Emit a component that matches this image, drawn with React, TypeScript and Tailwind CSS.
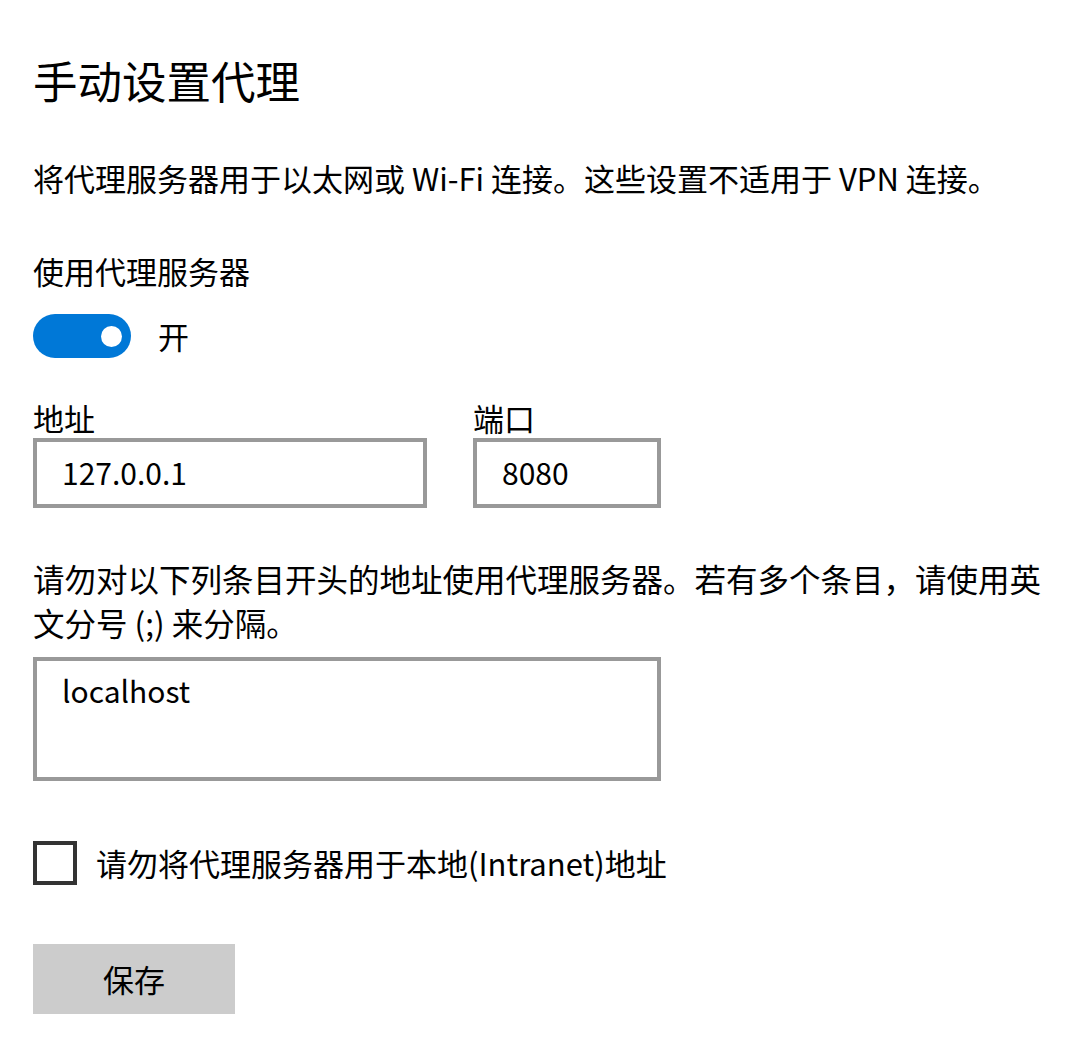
import { useState } from 'react';

const font = { fontFamily: '"Noto Sans CJK SC", "Noto Sans", sans-serif' };

export default function App() {
  const [enabled, setEnabled] = useState(true);
  const [address, setAddress] = useState('127.0.0.1');
  const [port, setPort] = useState('8080');
  const [bypass, setBypass] = useState('localhost');
  const [skipLocal, setSkipLocal] = useState(false);

  return (
    <div className="min-h-screen bg-white pl-[33px] pt-[50px] text-black" style={font}>
      <h1 className="h-[60px] text-[44.5px] leading-[60px] font-normal">手动设置代理</h1>

      <p className="mt-[46px] text-[31px] leading-[44px]">
        将代理服务器用于以太网或 Wi-Fi 连接。这些设置不适用于 VPN 连接。
      </p>

      <p className="mt-[49px] text-[31px] leading-[44px]">使用代理服务器</p>

      <div className="mt-[21px] flex items-center gap-[27px]">
        <button
          type="button"
          onClick={() => setEnabled(!enabled)}
          className={`flex h-[44px] w-[98px] items-center rounded-full px-[9px] ${
            enabled ? 'justify-end bg-[#0078d7]' : 'justify-start border-4 border-[#333] bg-white'
          }`}
        >
          <span className={`h-[21px] w-[21px] rounded-full ${enabled ? 'bg-white' : 'bg-[#333]'}`} />
        </button>
        <span className="text-[31px] leading-[44px]">{enabled ? '开' : '关'}</span>
      </div>

      <div className="mt-[40px] flex gap-[46px]">
        <div>
          <label className="block text-[31px] leading-[40px]">地址</label>
          <input
            value={address}
            onChange={(e) => setAddress(e.target.value)}
            className="h-[70px] w-[394px] border-4 border-[#999] bg-white pl-[25px] pb-[3px] text-[30px] outline-none"
          />
        </div>
        <div>
          <label className="block text-[31px] leading-[40px]">端口</label>
          <input
            value={port}
            onChange={(e) => setPort(e.target.value)}
            className="h-[70px] w-[188px] border-4 border-[#999] bg-white pl-[25px] pb-[3px] text-[30px] outline-none"
          />
        </div>
      </div>

      <p className="mt-[48px] w-[1030px] text-[31.5px] leading-[44px]">
        请勿对以下列条目开头的地址使用代理服务器。若有多个条目，请使用英文分号 (;) 来分隔。
      </p>

      <textarea
        value={bypass}
        onChange={(e) => setBypass(e.target.value)}
        className="mt-[13px] block h-[124px] w-[628px] resize-none border-4 border-[#999] bg-white px-[25px] pt-[7px] text-[30px] leading-[44px] outline-none"
      />

      <label className="mt-[60px] flex cursor-pointer items-center gap-[19px]">
        <input
          type="checkbox"
          checked={skipLocal}
          onChange={(e) => setSkipLocal(e.target.checked)}
          className="h-[44px] w-[44px] appearance-none border-4 border-[#333] bg-white"
        />
        <span className="text-[31px] leading-[44px]">请勿将代理服务器用于本地(Intranet)地址</span>
      </label>

      <button type="button" className="mt-[59px] block h-[70px] w-[202px] bg-[#cccccc] text-[31px]">
        保存
      </button>
    </div>
  );
}
